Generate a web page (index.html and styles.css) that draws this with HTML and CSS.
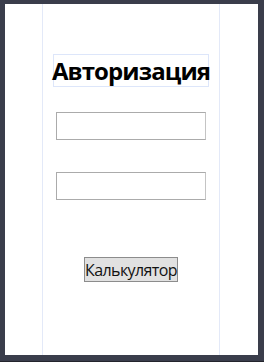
FILE: index.html
```html
<!DOCTYPE html>
<html lang="ru">
<head>
    <meta charset="UTF-8">
    <title>Авторизация</title>
    <link rel="stylesheet" href="styles.css">
</head>
<body>
    <div class="window">
        <div class="client">
            <div class="side"></div>
            <div class="column">
                <div class="title-box">
                    <h1>Авторизация</h1>
                </div>
                <input type="text" class="field" id="login">
                <input type="password" class="field" id="password">
                <button class="btn" type="button">Калькулятор</button>
            </div>
            <div class="side"></div>
        </div>
    </div>
</body>
</html>
```

FILE: styles.css
```css
* {
    margin: 0;
    padding: 0;
    box-sizing: border-box;
}

body {
    width: 264px;
    height: 362px;
    background: #2b2d37;
    font-family: "Open Sans", "Noto Sans", sans-serif;
}

.window {
    height: 362px;
    padding: 4px 6px 6px 5px;
    background: #3a3d4b;
    border-bottom: 1px solid #23242c;
}

.client {
    display: grid;
    grid-template-columns: 37px 178px 1fr;
    height: 100%;
    background: #ffffff;
}

.column {
    display: flex;
    flex-direction: column;
    align-items: center;
    border-left: 1px solid #e3e9f8;
    border-right: 1px solid #e3e9f8;
}

.title-box {
    margin-top: 50px;
    width: 156px;
    height: 33px;
    border: 1px solid #dde6fa;
    display: flex;
    align-items: center;
    justify-content: center;
}

.title-box h1 {
    font-size: 24px;
    font-weight: 700;
    color: #000000;
    letter-spacing: -0.9px;
}

.field {
    width: 150px;
    height: 28px;
    border: 1px solid #ababab;
    border-right-color: #c4c4c4;
    background: #ffffff;
    outline: none;
}

#login {
    margin-top: 25px;
}

#password {
    margin-top: 32px;
}

.btn {
    margin-top: 57px;
    width: 94px;
    height: 25px;
    background: #e1e1e1;
    border: 1px solid #8c8c8c;
    font-family: "Open Sans", "Noto Sans", sans-serif;
    font-size: 16px;
    letter-spacing: -0.6px;
    color: #111111;
}
```
